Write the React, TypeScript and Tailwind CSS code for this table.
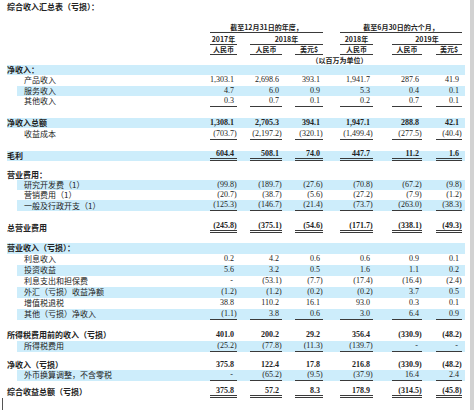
import React from 'react';

type Kind = 'head' | 'sub' | 'total';

interface Row {
  label: string;
  kind: Kind;
  vals?: string[];
  blue?: boolean;
  line?: 'single' | 'double';
  h: string;
}

const cjk = "font-['Noto_Sans_CJK_SC','Noto_Sans',sans-serif]";
const serif = "font-['Liberation_Serif','Noto_Sans_CJK_SC',serif]";

// cell widths (gap on the left + underline width)
const cells = [
  { w: 'w-[27px]', inner: 'w-[27px]' },
  { w: 'w-[45px]', inner: 'w-[32px]' },
  { w: 'w-[41px]', inner: 'w-[28px]' },
  { w: 'w-[50px]', inner: 'w-[33px]' },
  { w: 'w-[49px]', inner: 'w-[30px]' },
  { w: 'w-[40px]', inner: 'w-[26px]' },
];

const rows: (Row | { spacer: string })[] = [
  { label: '净收入：', kind: 'head', blue: true, h: 'h-[10px]' },
  { label: '产品收入', kind: 'sub', h: 'h-[10.5px]', vals: ['1,303.1', '2,698.6', '393.1', '1,941.7', '287.6', '41.9'] },
  { label: '服务收入', kind: 'sub', blue: true, h: 'h-[10.5px]', vals: ['4.7', '6.0', '0.9', '5.3', '0.4', '0.1'] },
  { label: '其他收入', kind: 'sub', line: 'single', h: 'h-[10.5px]', vals: ['0.3', '0.7', '0.1', '0.2', '0.7', '0.1'] },
  { spacer: 'h-[11px]' },
  { label: '净收入总额', kind: 'total', blue: true, h: 'h-[10.5px]', vals: ['1,308.1', '2,705.3', '394.1', '1,947.1', '288.8', '42.1'] },
  { label: '收益成本', kind: 'sub', line: 'single', h: 'h-[12px]', vals: ['(703.7)', '(2,197.2)', '(320.1)', '(1,499.4)', '(277.5)', '(40.4)'] },
  { spacer: 'h-[10.5px]' },
  { label: '毛利', kind: 'total', blue: true, line: 'double', h: 'h-[10.5px]', vals: ['604.4', '508.1', '74.0', '447.7', '11.2', '1.6'] },
  { spacer: 'h-[8.5px]' },
  { label: '营业费用：', kind: 'head', h: 'h-[10px]' },
  { label: '研究开发费（1）', kind: 'sub', blue: true, h: 'h-[10px]', vals: ['(99.8)', '(189.7)', '(27.6)', '(70.8)', '(67.2)', '(9.8)'] },
  { label: '营销费用（1）', kind: 'sub', h: 'h-[10.5px]', vals: ['(20.7)', '(38.7)', '(5.6)', '(27.2)', '(7.9)', '(1.2)'] },
  { label: '一般及行政开支（1）', kind: 'sub', blue: true, line: 'single', h: 'h-[11px]', vals: ['(125.3)', '(146.7)', '(21.4)', '(73.7)', '(263.0)', '(38.3)'] },
  { spacer: 'h-[11px]' },
  { label: '总营业费用', kind: 'total', line: 'double', h: 'h-[11px]', vals: ['(245.8)', '(375.1)', '(54.6)', '(171.7)', '(338.1)', '(49.3)'] },
  { spacer: 'h-[9.5px]' },
  { label: '营业收入（亏损）：', kind: 'head', blue: true, h: 'h-[11px]' },
  { label: '利息收入', kind: 'sub', h: 'h-[11px]', vals: ['0.2', '4.2', '0.6', '0.6', '0.9', '0.1'] },
  { label: '投资收益', kind: 'sub', blue: true, h: 'h-[11px]', vals: ['5.6', '3.2', '0.5', '1.6', '1.1', '0.2'] },
  { label: '利息支出和担保费', kind: 'sub', h: 'h-[11px]', vals: ['-', '(53.1)', '(7.7)', '(17.4)', '(16.4)', '(2.4)'] },
  { label: '外汇（亏损）收益净额', kind: 'sub', blue: true, h: 'h-[11px]', vals: ['(1.2)', '(1.2)', '(0.2)', '(0.2)', '3.7', '0.5'] },
  { label: '增值税退税', kind: 'sub', h: 'h-[11px]', vals: ['38.8', '110.2', '16.1', '93.0', '0.3', '0.1'] },
  { label: '其他（亏损）净收入', kind: 'sub', blue: true, line: 'single', h: 'h-[11px]', vals: ['(1.1)', '3.8', '0.6', '3.0', '6.4', '0.9'] },
  { spacer: 'h-[10px]' },
  { label: '所得税费用前的收入（亏损）', kind: 'total', h: 'h-[11px]', vals: ['401.0', '200.2', '29.2', '356.4', '(330.9)', '(48.2)'] },
  { label: '所得税费用', kind: 'sub', blue: true, line: 'single', h: 'h-[11px]', vals: ['(25.2)', '(77.8)', '(11.3)', '(139.7)', '-', '-'] },
  { spacer: 'h-[8px]' },
  { label: '净收入（亏损）', kind: 'total', h: 'h-[10.5px]', vals: ['375.8', '122.4', '17.8', '216.8', '(330.9)', '(48.2)'] },
  { label: '外币换算调整，不含零税', kind: 'sub', blue: true, line: 'single', h: 'h-[10.5px]', vals: ['-', '(65.2)', '(9.5)', '(37.9)', '16.4', '2.4'] },
  { spacer: 'h-[6px]' },
  { label: '综合收益总额（亏损）', kind: 'total', line: 'double', h: 'h-[11px]', vals: ['375.8', '57.2', '8.3', '178.9', '(314.5)', '(45.8)'] },
];

const Num = ({ v }: { v: string }) => {
  if (v === '-') return <span className="pr-[4px]">-</span>;
  const neg = v.startsWith('(');
  return (
    <>
      <span>{neg ? v.slice(0, -1) : v}</span>
      <span className="inline-block w-[3px]">{neg ? ')' : ''}</span>
    </>
  );
};

const DataRow = ({ row }: { row: Row }) => {
  const sub = row.kind === 'sub';
  const bold = row.kind !== 'sub';
  const bg = row.blue ? 'bg-[#cdedfb]' : '';
  const lineCls =
    row.line === 'single'
      ? 'border-b border-[#3a3a3a]'
      : row.line === 'double'
        ? 'border-b-[3px] border-double border-[#3a3a3a]'
        : '';
  return (
    <div className={`flex ${row.h} ${sub ? 'ml-[10px]' : ''} ${bg} pr-[3px]`}>
      <div
        className={`${sub ? 'w-[193px] pl-[7px]' : 'w-[203px]'} flex items-center text-[8px] leading-none ${cjk} ${bold ? 'font-bold' : ''}`}
      >
        {row.label}
      </div>
      {row.vals &&
        row.vals.map((v, i) => (
          <div key={i} className={`${cells[i].w} flex justify-end h-full`}>
            <div
              className={`${cells[i].inner} h-full flex items-center justify-end text-[8px] leading-none ${serif} ${bold ? 'font-bold' : ''} ${lineCls}`}
            >
              <Num v={v} />
            </div>
          </div>
        ))}
    </div>
  );
};

const App = () => {
  return (
    <div className="w-[474px] h-[410px] bg-white overflow-hidden flex text-[#222]">
      <div className="w-[470px] relative">
        <div className={`pl-[7px] pt-[2px] h-[12px] text-[8px] leading-[10px] font-bold ${cjk}`}>
          综合收入汇总表（亏损）：
        </div>

        <div className="pl-[7px] mt-[11px] w-[465px]">
          {/* period headers */}
          <div className={`flex h-[10px] text-[7px] font-bold ${cjk}`}>
            <div className="w-[203px]" />
            <div className="w-[113px] flex items-center justify-center border-b border-[#3a3a3a]">
              截至12月31日的年度，
            </div>
            <div className="w-[17px]" />
            <div className="w-[122px] flex items-center justify-center border-b border-[#3a3a3a]">
              截至6月30日的六个月，
            </div>
          </div>
          <div className={`flex h-[12px] pt-[2px] text-[7px] font-bold ${cjk}`}>
            <div className="w-[203px]" />
            <div className="w-[27px] flex items-center justify-center border-b border-[#3a3a3a]">2017年</div>
            <div className="w-[13px]" />
            <div className="w-[73px] flex items-center justify-center border-b border-[#3a3a3a]">2018年</div>
            <div className="w-[17px]" />
            <div className="w-[33px] flex items-center justify-center border-b border-[#3a3a3a]">2018年</div>
            <div className="w-[19px]" />
            <div className="w-[70px] flex items-center justify-center border-b border-[#3a3a3a]">2019年</div>
          </div>
          <div className={`flex h-[10px] text-[7px] font-bold ${cjk}`}>
            <div className="w-[203px]" />
            {['人民币', '人民币', '美元$', '人民币', '人民币', '美元$'].map((c, i) => (
              <div key={i} className={`${cells[i].w} flex justify-end`}>
                <div className={`${cells[i].inner} flex items-center justify-center border-b border-[#3a3a3a]`}>
                  {c}
                </div>
              </div>
            ))}
          </div>
          <div className={`flex h-[10px] text-[7px] font-bold ${cjk}`}>
            <div className="w-[210px]" />
            <div className="w-[245px] flex items-center justify-center">（以百万为单位）</div>
          </div>

          {rows.map((r, i) =>
            'spacer' in r ? <div key={i} className={r.spacer} /> : <DataRow key={i} row={r} />
          )}
        </div>
        <div className="absolute left-[2px] top-[398px] w-[1px] h-[12px] bg-[#555]" />
      </div>
      <div className="w-[4px] h-full bg-[#d2d2d2]" />
    </div>
  );
};

export default App;
